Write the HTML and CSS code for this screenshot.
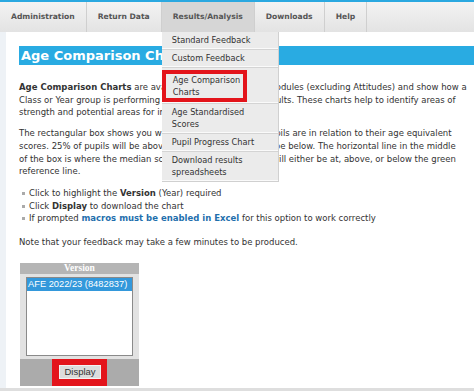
FILE: index.html
```html
<!DOCTYPE html>
<html lang="en">

<head>
    <meta charset="UTF-8">
    <title>Age Comparison Charts</title>
    <link rel="stylesheet" href="styles.css">
</head>

<body>
    <div class="topline"></div>

    <nav class="tabs">
        <div class="tab">Administration</div>
        <div class="tab">Return Data</div>
        <div class="tab active">Results/Analysis
            <ul class="dropdown">
                <li>Standard Feedback</li>
                <li>Custom Feedback</li>
                <li class="marked"><span class="redbox">Age Comparison<br>Charts</span></li>
                <li>Age Standardised<br>Scores</li>
                <li>Pupil Progress Chart</li>
                <li>Download results<br>spreadsheets</li>
            </ul>
        </div>
        <div class="tab">Downloads</div>
        <div class="tab">Help</div>
    </nav>

    <div class="page">
        <div class="content">
            <h1 class="heading"><span>Age Comparison Charts</span></h1>

            <p><strong>Age Comparison Charts</strong> are available for all of the core modules (excluding Attitudes) and show how a<br>
                Class or Year group is performing against age equivalent results. These charts help to identify areas of<br>
                strength and potential areas for improvement.</p>

            <p>The rectangular box shows you where the middle 50% of pupils are in relation to their age equivalent<br>
                scores. 25% of pupils will be above the box, 25% pupils will be below. The horizontal line in the middle<br>
                of the box is where the median score lies. This median line will either be at, above, or below the green<br>
                reference line.</p>

            <ul class="steps">
                <li>Click to highlight the <strong>Version</strong> (Year) required</li>
                <li>Click <strong>Display</strong> to download the chart</li>
                <li>If prompted <a href="#">macros must be enabled in Excel</a> for this option to work correctly</li>
            </ul>

            <p>Note that your feedback may take a few minutes to be produced.</p>

            <div class="version">
                <div class="version-title">Version</div>
                <div class="version-body">
                    <div class="listbox">
                        <div class="option selected">AFE 2022/23 (8482837)</div>
                    </div>
                </div>
                <div class="version-actions">
                    <div class="display-mark">
                        <button class="display-button">Display</button>
                    </div>
                </div>
            </div>
        </div>
    </div>

    <div class="bottombar"></div>
</body>

</html>
```

FILE: styles.css
```css
html,
body {
    margin: 0;
    padding: 0;
    height: 100%;
    overflow: hidden;
    font-family: "DejaVu Sans", Verdana, sans-serif;
    color: #333;
}

.topline {
    height: 2px;
    background-color: #2aa8e0;
}

.tabs {
    display: flex;
    height: 30px;
    background: linear-gradient(#f3f3f3, #e3e3e3);
    position: relative;
    z-index: 2;
}

.tab {
    position: relative;
    padding: 0 11px;
    line-height: 30px;
    font-size: 7.6px;
    font-weight: bold;
    color: #555;
    border-right: 1px solid #cfcfcf;
}

.tab.active {
    background-color: #d6d6d6;
}

.dropdown {
    position: absolute;
    top: 30px;
    left: 0;
    width: 116px;
    margin: 0;
    padding: 0;
    list-style: none;
    background-color: #ebebeb;
    border-right: 1px solid #d0d0d0;
    border-bottom: 1px solid #d0d0d0;
    font-weight: normal;
    color: #333;
}

.dropdown li {
    padding: 2px 10px;
    line-height: 12px;
    font-size: 8.2px;
    border-bottom: 1px solid #fafafa;
    border-top: 1px solid #d4d4d4;
}

.dropdown li:first-child {
    border-top: none;
}

.dropdown li.marked {
    padding: 2px 0 0 0;
}

.redbox {
    display: inline-block;
    padding: 0 3px 0 7px;
    border: 4px solid #e3141b;
}

.page {
    height: 356px;
    background-color: #eef2f6;
    padding-left: 6px;
}

.content {
    height: 100%;
    background-color: #fff;
    padding-left: 13px;
    padding-top: 14px;
    box-sizing: border-box;
    font-size: 8.5px;
    line-height: 12.7px;
    white-space: nowrap;
}

.heading {
    margin: 0 0 16px 0;
    height: 19px;
    background-color: #29abe2;
    font-size: 13px;
    line-height: 19px;
    color: #fff;
}

.heading span {
    padding-left: 2px;
}

.content p {
    margin: 0 0 8px 0;
}

.steps {
    margin: 9px 0 11px 0;
    padding: 0 0 0 10px;
    list-style: none;
}

.steps li {
    position: relative;
}

.steps li::before {
    content: "";
    position: absolute;
    left: -7px;
    top: 5px;
    width: 3px;
    height: 3px;
    background-color: #aaa;
}

.steps a {
    color: #1f6fad;
    font-weight: bold;
    text-decoration: none;
}

.version {
    width: 119px;
    margin-top: 14px;
    margin-left: 1px;
}

.version-title {
    height: 11px;
    background-color: #b5b5b5;
    color: #fff;
    font-family: "Liberation Serif", serif;
    font-weight: bold;
    font-size: 9.5px;
    line-height: 11px;
    text-align: center;
}

.version-body {
    background-color: #e2e2e2;
    padding: 3px 6px 3px 6px;
}

.listbox {
    height: 77px;
    background-color: #fff;
    border: 1px solid #8a8a8a;
}

.option {
    font-family: "Liberation Sans", Arial, sans-serif;
    font-size: 9.3px;
    line-height: 13px;
    padding-left: 1px;
    overflow: hidden;
}

.option.selected {
    background-color: #3398db;
    color: #fff;
}

.version-actions {
    display: flex;
    justify-content: center;
    height: 27px;
    background-color: #ababab;
}

.display-mark {
    background-color: #e3141b;
    padding: 6px 6px 0 7px;
    height: 27px;
    box-sizing: border-box;
}

.display-button {
    font-family: "Liberation Sans", Arial, sans-serif;
    font-size: 9.5px;
    color: #333;
    background-color: #dcdcdc;
    border: 1px solid #f2f2f2;
    padding: 1px 4px;
    height: 14px;
    line-height: 10px;
}

.bottombar {
    height: 3px;
    background-color: #dedede;
}
```
